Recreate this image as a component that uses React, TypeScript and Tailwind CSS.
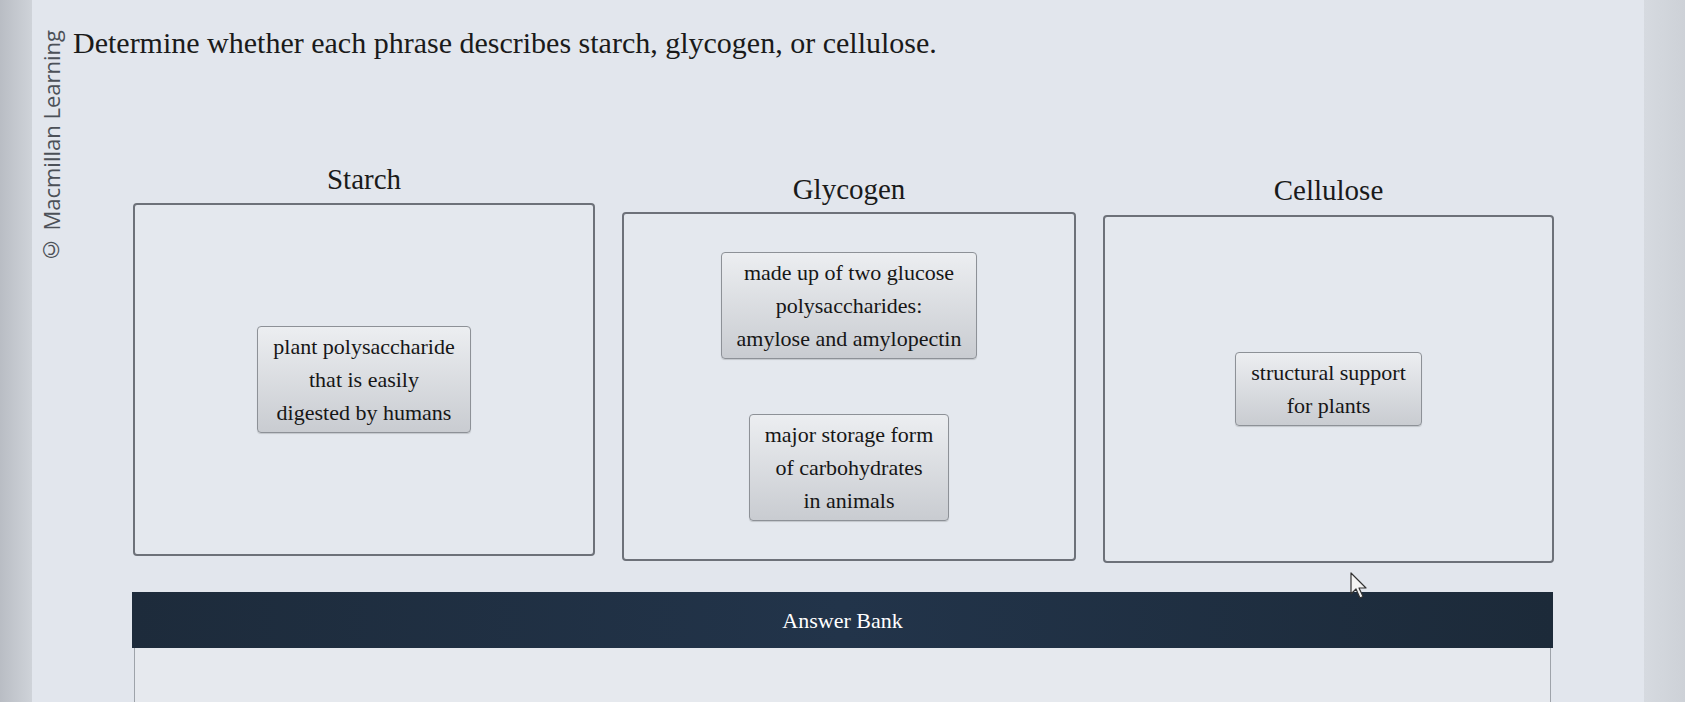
const serif = { fontFamily: '"Liberation Serif", "Times New Roman", serif' };

function Chip({ lines }: { lines: string[] }) {
  return (
    <div className="rounded-[4px] border border-[#8d9197] bg-gradient-to-b from-[#eceef1] to-[#c9ccd1] px-[15px] py-[3px] text-center text-[22px] leading-[33px] text-[#161616] shadow-[0_1px_1px_rgba(0,0,0,0.15)]">
      {lines.map((l) => (
        <div key={l}>{l}</div>
      ))}
    </div>
  );
}

function Column({ title, top, boxTop, boxH, width, children }: {
  title: string; top: string; boxTop: string; boxH: string; width: string; children: React.ReactNode;
}) {
  return (
    <div className={`flex flex-col ${top} ${width}`}>
      <div className={`text-center text-[29px] leading-[34px] text-[#1a1a1a] ${boxTop}`}>{title}</div>
      <div className={`flex flex-col items-center justify-center gap-[55px] rounded-[4px] border-2 border-[#6d7179] bg-[#e4e8ee] ${boxH}`}>
        {children}
      </div>
    </div>
  );
}

export default function App() {
  return (
    <div className="relative flex h-[702px] w-full overflow-hidden bg-[#e2e6ed]" style={serif}>
      {/* screen bezel, left */}
      <div className="w-[32px] shrink-0 bg-gradient-to-r from-[#b9bdc4] to-[#cfd3d9]" />

      <div className="flex flex-1">
        {/* watermark */}
        <div className="flex w-[38px] shrink-0 items-start justify-center pt-[30px]">
          <span
            className="rotate-180 text-[22px] leading-none font-medium text-[#4c5158] [writing-mode:vertical-rl]"
            style={{ fontFamily: '"Open Sans", "Noto Sans", sans-serif' }}
          >
            © Macmillan Learning
          </span>
        </div>

        <div className="flex flex-1 flex-col pt-[26px] pl-[3px]">
          <h1 className="text-[30px] leading-[34px] font-normal text-[#1a1a1a]">
            Determine whether each phrase describes starch, glycogen, or cellulose.
          </h1>

          <div className="ml-[60px] w-[1422px]">
            <div className="flex items-start gap-[27px]">
              <Column title="Starch" top="pt-[102px]" boxTop="mb-[7px]" boxH="h-[353px]" width="w-[462px]">
                <Chip lines={['plant polysaccharide', 'that is easily', 'digested by humans']} />
              </Column>
              <Column title="Glycogen" top="pt-[112px]" boxTop="mb-[6px]" boxH="h-[349px]" width="w-[454px]">
                <Chip lines={['made up of two glucose', 'polysaccharides:', 'amylose and amylopectin']} />
                <Chip lines={['major storage form', 'of carbohydrates', 'in animals']} />
              </Column>
              <Column title="Cellulose" top="pt-[113px]" boxTop="mb-[8px]" boxH="h-[348px]" width="w-[451px]">
                <Chip lines={['structural support', 'for plants']} />
              </Column>
            </div>

            {/* answer bank */}
            <div className="mt-[29px] -ml-px w-[1421px]">
              <div className="flex h-[56px] items-center justify-center bg-gradient-to-r from-[#1d2b3b] via-[#22344a] to-[#1c2a39] text-[22px] text-white">
                Answer Bank
              </div>
              <div className="mx-[2px] h-[80px] border border-t-0 border-[#9ea3aa] bg-[#e6e9ee]" />
            </div>
          </div>
        </div>
      </div>

      {/* screen edge, right */}
      <div className="w-[41px] shrink-0 bg-gradient-to-r from-[#d6dae0] to-[#cdd1d7]" />

      {/* mouse pointer */}
      <svg className="absolute left-[1350px] top-[572px]" width="18" height="28" viewBox="0 0 18 28">
        <path d="M1 1 L1 22 L6 17 L10 26 L13 24.5 L9 16 L16 16 Z" fill="#f4f4f4" stroke="#333" strokeWidth="1.2" strokeLinejoin="round" />
      </svg>
    </div>
  );
}
